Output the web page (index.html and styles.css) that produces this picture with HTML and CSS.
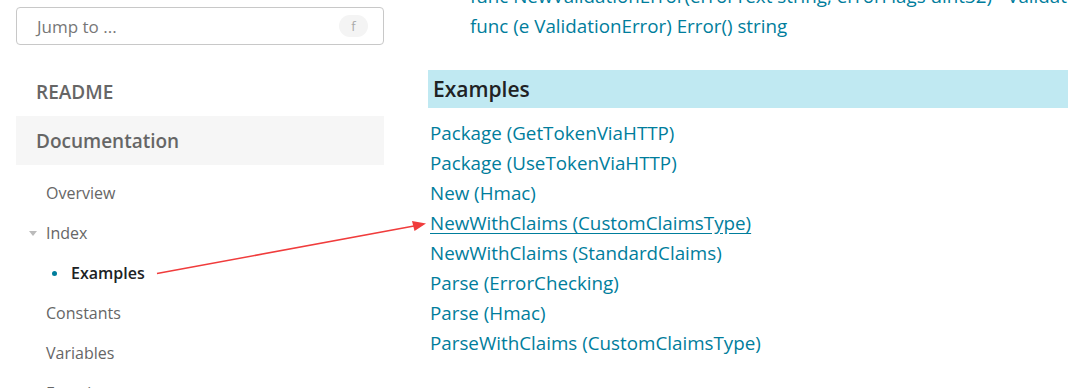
FILE: index.html
```html
<!DOCTYPE html>
<html>
<head>
<meta charset="utf-8">
<link rel="stylesheet" href="styles.css">
</head>
<body>
<div class="page">
  <aside class="sidebar">
    <div class="search">
      <span class="placeholder">Jump to ...</span>
      <span class="key">f</span>
    </div>
    <div class="nav-top nav-first">README</div>
    <div class="nav-top nav-active">Documentation</div>
    <ul class="subnav">
      <li>Overview</li>
      <li class="has-caret"><span class="caret"></span>Index</li>
      <li class="sub2"><span class="dot"></span>Examples</li>
      <li>Constants</li>
      <li>Variables</li>
      <li>Functions</li>
    </ul>
  </aside>
  <main class="main">
    <ul class="funcs">
      <li>func NewValidationError(errorText string, errorFlags uint32) *ValidationError</li>
      <li>func (e ValidationError) Error() string</li>
    </ul>
    <h2 class="section">Examples</h2>
    <ul class="examples">
      <li>Package (GetTokenViaHTTP)</li>
      <li>Package (UseTokenViaHTTP)</li>
      <li>New (Hmac)</li>
      <li class="hover">NewWithClaims (CustomClaimsType)</li>
      <li>NewWithClaims (StandardClaims)</li>
      <li>Parse (ErrorChecking)</li>
      <li>Parse (Hmac)</li>
      <li>ParseWithClaims (CustomClaimsType)</li>
    </ul>
  </main>
</div>
<svg class="arrow" width="1068" height="388" viewBox="0 0 1068 388">
  <line x1="157" y1="273.5" x2="414" y2="226" stroke="#f03c3c" stroke-width="1.6"/>
  <polygon points="426,223.5 412,221 414.5,231" fill="#f03c3c"/>
</svg>
</body>
</html>
```

FILE: styles.css
```css
html, body {
  margin: 0;
  padding: 0;
  background: #fff;
  overflow: hidden;
}
body {
  width: 1068px;
  height: 388px;
  position: relative;
  font-family: "Open Sans", "Noto Sans", sans-serif;
}
.page {
  display: flex;
  align-items: flex-start;
}
.sidebar {
  width: 368px;
  margin-left: 16px;
  flex: none;
}
.search {
  margin-top: 7px;
  height: 36px;
  border: 1px solid #c8c8c8;
  border-radius: 4px;
  display: flex;
  align-items: center;
  justify-content: space-between;
  padding: 0 15px 0 20px;
}
.placeholder {
  font-size: 17px;
  color: #777;
}
.key {
  width: 29px;
  height: 22px;
  border-radius: 11px;
  background: #f4f4f4;
  color: #aaa;
  font-size: 13px;
  display: flex;
  align-items: center;
  justify-content: center;
}
.nav-top {
  height: 49px;
  display: flex;
  align-items: center;
  padding-left: 20px;
  font-size: 19px;
  font-weight: 600;
  color: #666;
}
.nav-first {
  margin-top: 22px;
}
.nav-active {
  background: #f6f6f6;
}
.subnav {
  list-style: none;
  margin: 8px 0 0;
  padding: 0 0 0 30px;
}
.subnav li {
  height: 40px;
  display: flex;
  align-items: center;
  font-size: 16px;
  color: #666;
  position: relative;
}
.caret {
  position: absolute;
  left: -17px;
  top: 18px;
  width: 0;
  height: 0;
  border-left: 4.5px solid transparent;
  border-right: 4.5px solid transparent;
  border-top: 5px solid #bbb;
}
.sub2 {
  padding-left: 25px;
  font-weight: 600;
  color: #202224 !important;
}
.dot {
  position: absolute;
  left: 6px;
  top: 18px;
  width: 5px;
  height: 5px;
  border-radius: 50%;
  background: #007d9c;
}
.main {
  flex: 1;
  margin-left: 44px;
  min-width: 0;
}
.funcs {
  list-style: none;
  margin: -19px 0 0;
  padding: 0 0 0 42px;
  white-space: nowrap;
  overflow: hidden;
}
.funcs li {
  height: 30px;
  line-height: 30px;
  font-size: 18.8px;
  color: #007d9c;
}
.section {
  margin: 29px 0 0;
  height: 38px;
  line-height: 38px;
  padding-left: 5px;
  background: #c0e9f2;
  font-size: 21px;
  font-weight: 600;
  color: #202224;
}
.examples {
  list-style: none;
  margin: 10px 0 0;
  padding: 0 0 0 2px;
}
.examples li {
  height: 30px;
  line-height: 30px;
  font-size: 18.8px;
  color: #007d9c;
}
.examples .hover {
  text-decoration: underline;
  text-underline-offset: 3px;
}
.arrow {
  position: absolute;
  left: 0;
  top: 0;
  pointer-events: none;
}
```
